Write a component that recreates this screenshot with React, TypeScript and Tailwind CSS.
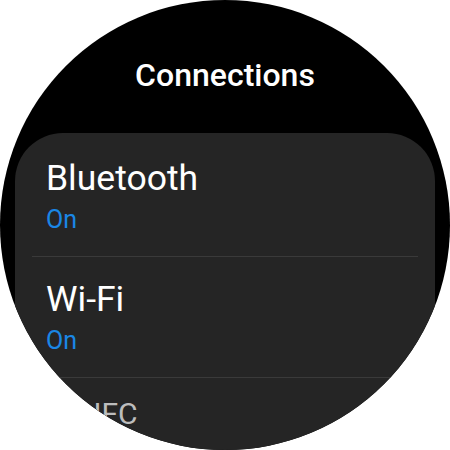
import React from 'react';

type Item = { title: string; status: string };

const items: Item[] = [
  { title: 'Bluetooth', status: 'On' },
  { title: 'Wi-Fi', status: 'On' },
];

const ConnectionRow: React.FC<{ item: Item }> = ({ item }) => (
  <div className="pl-[31px] pt-[22px] pb-[22px]">
    <p className="text-[35.5px] leading-[40px] text-white">{item.title}</p>
    <p className="mt-[8px] text-[25px] leading-[28px] text-[#1a87e6]">{item.status}</p>
  </div>
);

const App: React.FC = () => {
  return (
    <div
      className="w-[450px] h-[450px] bg-white"
      style={{ fontFamily: 'Roboto, "Noto Sans", sans-serif' }}
    >
      <div className="w-[450px] h-[450px] rounded-full bg-black overflow-hidden">
        <h1 className="pt-[56px] text-center text-[32px] leading-[38px] font-medium text-white">
          Connections
        </h1>

        <div className="mt-[39px] mx-[15px] h-[400px] rounded-t-[48px] bg-[#252525] pt-[3px]">
          {items.map((item) => (
            <React.Fragment key={item.title}>
              <ConnectionRow item={item} />
              <div className="mx-[17px] h-px bg-[#3a3a3a]" />
            </React.Fragment>
          ))}
          <p className="pl-[65px] pt-[18px] text-[30px] leading-[36px] text-[#bdbdbd]">NFC</p>
        </div>
      </div>
    </div>
  );
};

export default App;
